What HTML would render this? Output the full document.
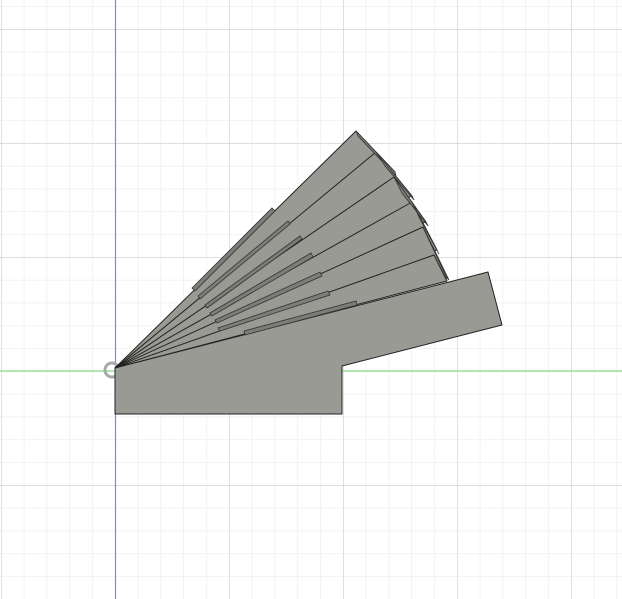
<!DOCTYPE html>
<html><head><style>html,body{margin:0;padding:0;background:#fff;width:622px;height:599px;overflow:hidden}</style></head>
<body>
<svg width="622" height="599" viewBox="0 0 622 599" xmlns="http://www.w3.org/2000/svg">
<defs>
<pattern id="minor" width="22.8" height="22.8" patternUnits="userSpaceOnUse" x="115" y="371">
<path d="M0 0H22.8M0 0V22.8" stroke="#ebebeb" stroke-width="1.2" fill="none"/>
</pattern>
<pattern id="major" width="114" height="114" patternUnits="userSpaceOnUse" x="115" y="371">
<path d="M0 0H114M0 0V114" stroke="#d4d4d4" stroke-width="1.4" fill="none"/>
</pattern>
</defs>
<rect width="622" height="599" fill="#fff"/>
<rect width="622" height="599" fill="url(#minor)"/>
<rect width="622" height="599" fill="url(#major)"/>
<line x1="0" y1="371" x2="622" y2="371" stroke="#8be08b" stroke-width="1.2"/>
<line x1="115.5" y1="0" x2="115.5" y2="599" stroke="#8080ff" stroke-width="1.2"/>
<circle cx="112" cy="370" r="7" fill="none" stroke="#a8a8a8" stroke-width="3"/>
<g stroke="#222" stroke-width="1" fill="#9a9a94" stroke-linejoin="round">
<polygon points="115,368 356,131 395,172 383,176"/>
<polygon points="115,368 376,152 412,196 400,200"/>
<polygon points="115,368 394,177 426,222 414,225"/>
<polygon points="115,368 412,202 437,250 425,253"/>
<polygon points="115,368 423,227 447,278 435,280"/>
<polygon points="115,368 434,255 447,281"/>
<polygon points="115,368 488,272 502,325 342,366 342,414 115,414"/>
</g>
<g stroke="#333" stroke-width="0.8" fill="#7d7d78">
<polygon points="192,288 272,208 275,211 195,291"/>
<polygon points="198,296 288,221 290,224 200,299"/>
<polygon points="205,305 300,236 302,239 207,308"/>
<polygon points="210,313 311,253 313,257 212,316"/>
<polygon points="215,320 320,272 322,276 217,323"/>
<polygon points="218,328 328,291 330,295 220,331"/>
<polygon points="244,331 356,301 357,305 245,335"/>
<polygon points="356,131 395,172 396,176 358,136"/>
<polygon points="376,152 412,196 414,200 385,166"/>
<polygon points="394,177 426,222 428,226 402,193"/>
<polygon points="412,202 437,250 439,254 420,219"/>
<polygon points="423,227 447,278 449,280 432,245"/>
</g>
</svg>
</body></html>
